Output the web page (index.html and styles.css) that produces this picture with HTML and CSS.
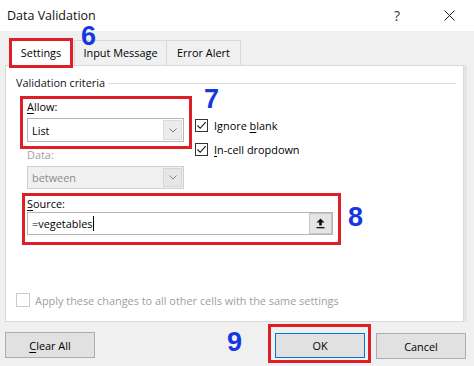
FILE: index.html
```html
<!DOCTYPE html>
<html lang="en">

<head>
    <meta charset="UTF-8">
    <title>Data Validation</title>
    <link rel="stylesheet" href="styles.css">
</head>

<body>
    <div class="window">
        <header class="titlebar">
            <span class="title">Data Validation</span>
            <span class="tb-btn help">?</span>
            <span class="tb-btn close">
                <svg width="11" height="11" viewBox="0 0 11 11">
                    <path d="M0.5 0.5 L10.5 10.5 M10.5 0.5 L0.5 10.5" stroke="#222" stroke-width="1" fill="none" />
                </svg>
            </span>
        </header>

        <nav class="tabs">
            <div class="tab active mark">Settings</div>
            <div class="tab">Input Message</div>
            <div class="tab">Error Alert</div>
            <span class="step step-6">6</span>
        </nav>

        <section class="panel">
            <div class="group-title">
                <span>Validation criteria</span>
                <i class="rule"></i>
            </div>

            <div class="allow-row">
                <div class="mark allow-box">
                    <div class="field-label"><u>A</u>llow:</div>
                    <div class="select">
                        <span class="value">List</span>
                        <span class="drop">
                            <svg width="8" height="5" viewBox="0 0 8 5">
                                <path d="M0.5 0.5 L4 4 L7.5 0.5" stroke="#777" fill="none" />
                            </svg>
                        </span>
                    </div>
                </div>
                <div class="options">
                    <span class="step step-7">7</span>
                    <label class="check">
                        <span class="box">
                            <svg width="11" height="11" viewBox="0 0 11 11">
                                <path d="M1.5 5.5 L4.2 8.3 L9.6 2.2" stroke="#111" stroke-width="1.1" fill="none" />
                            </svg>
                        </span>
                        Ignore&nbsp;<u>b</u>lank
                    </label>
                    <label class="check second">
                        <span class="box">
                            <svg width="11" height="11" viewBox="0 0 11 11">
                                <path d="M1.5 5.5 L4.2 8.3 L9.6 2.2" stroke="#111" stroke-width="1.1" fill="none" />
                            </svg>
                        </span>
                        <u>I</u>n-cell dropdown
                    </label>
                </div>
            </div>

            <div class="data-field">
                <div class="field-label disabled">Data:</div>
                <div class="select disabled">
                    <span class="value">between</span>
                    <span class="drop">
                        <svg width="8" height="5" viewBox="0 0 8 5">
                            <path d="M0.5 0.5 L4 4 L7.5 0.5" stroke="#888" fill="none" />
                        </svg>
                    </span>
                </div>
            </div>

            <div class="source-row">
                <div class="mark source-box">
                    <div class="field-label"><u>S</u>ource:</div>
                    <div class="input">
                        <span class="value">=vegetables</span>
                        <span class="caret"></span>
                        <span class="collapse">
                            <svg width="9" height="11" viewBox="0 0 9 11">
                                <path d="M4.5 0.5 L8.5 4.5 L5.8 4.5 L5.8 7.5 L3.2 7.5 L3.2 4.5 L0.5 4.5 Z" fill="#111" />
                                <rect x="0.5" y="9" width="8" height="1.3" fill="#111" />
                            </svg>
                        </span>
                    </div>
                </div>
                <span class="step step-8">8</span>
            </div>

            <label class="check apply disabled">
                <span class="box"></span>
                Apply these changes to all other cells with the same settings
            </label>
        </section>

        <footer class="buttons">
            <button class="btn"><u>C</u>lear All</button>
            <span class="step step-9">9</span>
            <div class="mark ok-box">
                <button class="btn default">OK</button>
            </div>
            <button class="btn cancel">Cancel</button>
        </footer>
    </div>
</body>

</html>
```

FILE: styles.css
```css
* {
    margin: 0;
    padding: 0;
    box-sizing: border-box;
}

body {
    width: 474px;
    height: 366px;
    overflow: hidden;
    background: #f0f0f0;
    font-family: "Open Sans", "Noto Sans", sans-serif;
    font-size: 10.9px;
    color: #000;
}

u {
    text-decoration: underline;
    text-underline-offset: 2px;
}

.window {
    display: flex;
    flex-direction: column;
    height: 366px;
}

/* title bar */

.titlebar {
    height: 31px;
    background: #fff;
    display: flex;
    align-items: center;
    padding-left: 7px;
}

.title {
    font-size: 12.5px;
    color: #111;
    flex-grow: 1;
}

.tb-btn {
    width: 46px;
    display: flex;
    justify-content: center;
    align-items: center;
}

.help {
    font-size: 14px;
    color: #333;
    margin-right: 6px;
}

.close {
    margin-right: 2px;
}

/* annotation numbers */

.step {
    font-family: "Liberation Sans", Arial, sans-serif;
    font-weight: bold;
    font-size: 27px;
    line-height: 27px;
    color: #1637e0;
}

.mark {
    border: 3px solid #dd1f27;
}

/* tabs */

.tabs {
    height: 34px;
    display: flex;
    align-items: flex-end;
    padding-left: 9px;
    position: relative;
}

.tab {
    height: 25px;
    line-height: 23px;
    border: 1px solid #d9d9d9;
    border-bottom: 0;
    text-align: center;
    white-space: nowrap;
}

.tab + .tab {
    margin-left: -1px;
}

.tab:nth-child(2) {
    width: 93px;
    margin-left: 1px;
}

.tab:nth-child(3) {
    width: 75px;
}

.tab.active {
    width: 64px;
    height: 30px;
    line-height: 24px;
    margin-bottom: -3px;
    background: #fff;
    border: 3px solid #dd1f27;
    position: relative;
    z-index: 1;
}

.step-6 {
    position: absolute;
    left: 81px;
    top: -8px;
}

/* settings panel */

.panel {
    margin-left: 5px;
    width: 459px;
    height: 257px;
    background: #fff;
    border: 1px solid #dadada;
    box-shadow: 3px 0 0 #e4e4e4;
    padding: 9px 7px 13px 10px;
    display: flex;
    flex-direction: column;
}

.group-title {
    display: flex;
    align-items: center;
    height: 16px;
    line-height: 16px;
    color: #111;
}

.rule {
    flex-grow: 1;
    height: 1px;
    background: #dcdcdc;
    margin-left: 3px;
}

.field-label {
    height: 16px;
    line-height: 16px;
}

.disabled {
    color: #a0a0a0;
}

.select {
    margin-top: 3px;
    width: 157px;
    height: 24px;
    border: 1px solid #b5b5b5;
    background: #fff;
    display: flex;
    align-items: center;
    padding-left: 4px;
}

.select .value {
    flex-grow: 1;
}

.drop {
    width: 19px;
    height: 20px;
    margin-right: 1px;
    background: #ececec;
    border: 1px solid #dadada;
    display: flex;
    justify-content: center;
    align-items: center;
}

.select.disabled {
    height: 23px;
    background: #f0f0f0;
    border-color: #cfcfcf;
    color: #8c8c8c;
}

.select.disabled .drop {
    height: 19px;
    background: #e6e6e6;
    border-color: #d6d6d6;
}

.allow-row {
    display: flex;
    height: 53px;
    margin-top: 5px;
    margin-left: 4px;
}

.allow-box {
    width: 172px;
    height: 53px;
    padding: 0 5px 0 4px;
}

.options {
    margin-left: 3px;
    margin-top: -10px;
}

.step-7 {
    display: block;
    margin-left: 9px;
}

.check {
    display: flex;
    align-items: center;
    height: 16px;
    margin-top: 4px;
}

.check.second {
    margin-top: 8px;
}

.box {
    width: 13px;
    height: 13px;
    border: 1px solid #333;
    background: #fff;
    margin-right: 6px;
    display: flex;
    justify-content: center;
    align-items: center;
}

.data-field {
    padding-left: 11px;
    margin-top: -2px;
}

.source-row {
    display: flex;
    align-items: flex-start;
    margin-top: 4px;
    margin-left: 6px;
}

.source-box {
    width: 319px;
    height: 52px;
    padding: 0 5px 0 2px;
}

.input {
    height: 23px;
    border: 1px solid #b5b5b5;
    display: flex;
    align-items: center;
    padding-left: 4px;
}

.caret {
    width: 1px;
    height: 15px;
    background: #000;
    margin-left: 1px;
}

.collapse {
    margin-left: auto;
    width: 23px;
    height: 21px;
    background: #e5e5e5;
    border: 1px solid #c6c6c6;
    display: flex;
    justify-content: center;
    align-items: center;
}

.step-8 {
    margin-left: 7px;
    margin-top: 11px;
}

.check.apply {
    margin-top: auto;
}

.apply .box {
    width: 14px;
    height: 14px;
    border-color: #cccccc;
    margin-right: 5px;
}

/* bottom buttons */

.buttons {
    flex-grow: 1;
    display: flex;
    align-items: flex-start;
    padding: 0 8px 0 5px;
}

.btn {
    width: 90px;
    height: 26px;
    margin-top: 10px;
    background: #e1e1e1;
    border: 1px solid #adadad;
    font-family: inherit;
    font-size: 10.9px;
    color: #000;
}

.step-9 {
    margin-left: auto;
    margin-right: 26px;
    margin-top: 7px;
}

.ok-box {
    margin-top: 2px;
    padding: 6px 3px 2px 4px;
}

.btn.default {
    margin-top: 0;
    height: 25px;
    border-color: #0078d7;
}

.btn.cancel {
    margin-left: 5px;
    margin-top: 11px;
}
```
